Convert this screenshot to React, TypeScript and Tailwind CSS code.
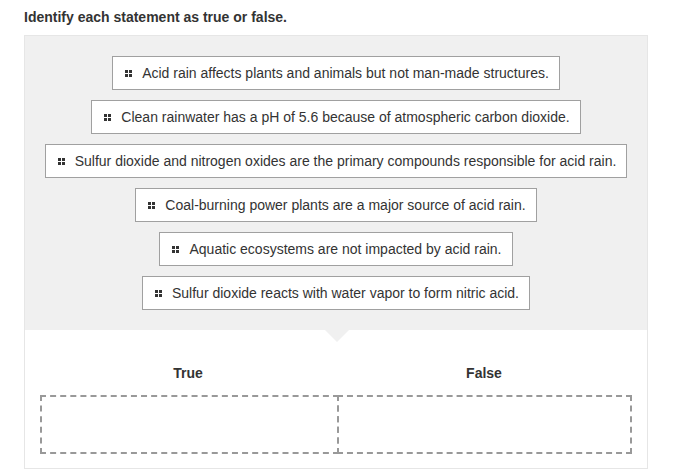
import React from 'react';

const statements = [
  'Acid rain affects plants and animals but not man-made structures.',
  'Clean rainwater has a pH of 5.6 because of atmospheric carbon dioxide.',
  'Sulfur dioxide and nitrogen oxides are the primary compounds responsible for acid rain.',
  'Coal-burning power plants are a major source of acid rain.',
  'Aquatic ecosystems are not impacted by acid rain.',
  'Sulfur dioxide reacts with water vapor to form nitric acid.',
];

// four-dot drag handle
const Grip = () => (
  <svg width="7" height="7" viewBox="0 0 7 7" className="shrink-0">
    <rect x="0" y="0" width="3" height="3" fill="#333" />
    <rect x="4" y="0" width="3" height="3" fill="#333" />
    <rect x="0" y="4" width="3" height="3" fill="#333" />
    <rect x="4" y="4" width="3" height="3" fill="#333" />
  </svg>
);

const Card: React.FC<{ text: string }> = ({ text }) => (
  <div className="flex h-[34px] items-center gap-[10px] border border-[#a0a0a0] bg-white pl-[12px] pr-[10px] text-[14px] text-[#333]">
    <Grip />
    <span>{text}</span>
  </div>
);

const Bucket: React.FC<{ label: string }> = ({ label }) => (
  <div className="flex flex-1 flex-col items-center">
    <div className="mb-[14px] h-[16px] text-[14px] font-bold leading-[16px] text-[#333]">{label}</div>
  </div>
);

export default function App() {
  return (
    <div className="h-[470px] w-[692px] bg-white" style={{ fontFamily: '"Liberation Sans", Arial, sans-serif' }}>
      <div className="px-[24px] pt-[8px]">
        <div className="h-[18px] text-[14px] font-bold leading-[18px] text-[#333]">
          Identify each statement as true or false.
        </div>
        <div className="mt-[9px] w-[624px] border border-[#e6e6e6]">
          <div className="relative flex flex-col items-center gap-[10px] bg-[#f0f0f0] pb-[20px] pt-[20px]">
            {statements.map((s) => (
              <Card key={s} text={s} />
            ))}
            <div className="absolute left-[300px] top-full h-0 w-0 border-x-[12px] border-t-[12px] border-x-transparent border-t-[#f0f0f0]" />
          </div>
          <div className="px-[15px] pb-[14px] pt-[35px]">
            <div className="flex">
              <Bucket label="True" />
              <Bucket label="False" />
            </div>
            <div className="flex">
              <div className="h-[59px] w-[300px] border-2 border-dashed border-[#999]" />
              <div className="ml-[-2px] h-[59px] w-[297px] border-2 border-dashed border-[#999]" />
            </div>
          </div>
        </div>
      </div>
    </div>
  );
}
